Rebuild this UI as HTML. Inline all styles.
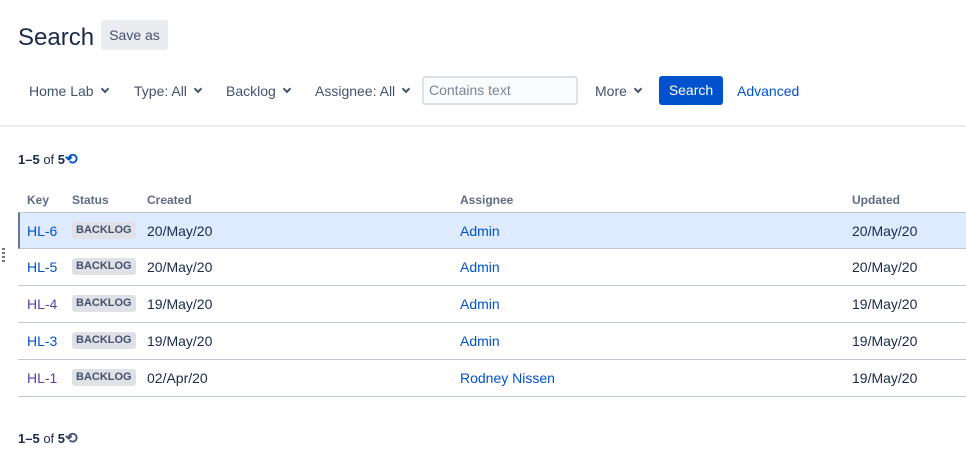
<!DOCTYPE html>
<html><head><style>
*{margin:0;padding:0;box-sizing:border-box}
body{width:966px;height:457px;overflow:hidden;background:#fff;font-family:"Liberation Sans",sans-serif;color:#172b4d;font-size:14px;position:relative}
.a{position:absolute;white-space:nowrap}
h1{position:absolute;left:18px;top:24px;font-size:24px;font-weight:normal;color:#172b4d}
.btn{position:absolute;left:101px;top:20px;width:67px;height:30px;background:#ebecf0;border-radius:3px;font-size:14px;line-height:30px;text-align:center;color:#42526e}
.f{position:absolute;top:83px;color:#42526e;font-size:14px}
.chev{display:inline-block;width:6px;height:6px;border-right:2px solid #42526e;border-bottom:2px solid #42526e;transform:rotate(45deg);margin-left:8px;position:relative;top:-4px}
.inp{position:absolute;left:422px;top:76px;width:156px;height:29px;border:2px solid #dfe1e6;border-radius:3px;background:#fafbfc;color:#7a869a;padding-left:5px;line-height:25px}
.sb{position:absolute;left:659px;top:76px;width:64px;height:29px;background:#0052cc;border-radius:3px;color:#fff;text-align:center;line-height:29px}
.hr{position:absolute;left:0;top:125px;width:966px;height:2px;background:#ebecf0}
.cnt{position:absolute;left:18px;font-size:13px;color:#172b4d}
.cnt b{font-weight:bold}
.rf{color:#0052cc;font-weight:bold;font-size:15px}
.th{position:absolute;top:193px;font-size:12px;font-weight:bold;color:#5e6c84}
.row{position:absolute;left:18px;width:948px;height:37px;border-bottom:1px solid #c1c7d0}
.row span{position:absolute;top:10px}
.k{left:9px;color:#0052cc}
.kv{left:9px;color:#5243aa}
.st{left:54px;top:9px!important;background:#dfe1e6;color:#42526e;font-size:11px;font-weight:bold;padding:2px 4px;border-radius:3px;line-height:13px}
.c{left:129px}
.as{left:442px;color:#0052cc}
.u{left:834px}
</style></head><body>
<h1>Search</h1>
<div class="btn">Save as</div>
<div class="f" style="left:29px">Home Lab<span class="chev"></span></div>
<div class="f" style="left:134px">Type: All<span class="chev"></span></div>
<div class="f" style="left:226px">Backlog<span class="chev"></span></div>
<div class="f" style="left:315px">Assignee: All<span class="chev"></span></div>
<div class="inp">Contains text</div>
<div class="f" style="left:595px">More<span class="chev"></span></div>
<div class="sb">Search</div>
<div class="f" style="left:737px;color:#0052cc">Advanced</div>
<div class="hr"></div>
<div class="cnt a" style="top:150px"><b>1–5</b> of <b>5</b><span class="rf">⟲</span></div>
<div class="th" style="left:27px">Key</div>
<div class="th" style="left:72px">Status</div>
<div class="th" style="left:147px">Created</div>
<div class="th" style="left:460px">Assignee</div>
<div class="th" style="left:852px">Updated</div>
<div class="row" style="top:212px;background:#deebff;border-left:2px solid #6b778c;border-top:1px solid #c1c7d0"><span class="k" style="left:7px">HL-6</span><span class="st" style="left:52px">BACKLOG</span><span class="c" style="left:127px">20/May/20</span><span class="as" style="left:440px">Admin</span><span class="u" style="left:832px">20/May/20</span></div>
<div class="row" style="top:249px"><span class="k">HL-5</span><span class="st">BACKLOG</span><span class="c">20/May/20</span><span class="as">Admin</span><span class="u">20/May/20</span></div>
<div class="row" style="top:286px"><span class="kv">HL-4</span><span class="st">BACKLOG</span><span class="c">19/May/20</span><span class="as">Admin</span><span class="u">19/May/20</span></div>
<div class="row" style="top:323px"><span class="k">HL-3</span><span class="st">BACKLOG</span><span class="c">19/May/20</span><span class="as">Admin</span><span class="u">19/May/20</span></div>
<div class="row" style="top:360px"><span class="kv">HL-1</span><span class="st">BACKLOG</span><span class="c">02/Apr/20</span><span class="as">Rodney Nissen</span><span class="u">19/May/20</span></div>
<div class="a" style="left:2px;top:248px;width:3px;height:16px;background:repeating-linear-gradient(#6b778c 0 2px,transparent 2px 4px)"></div>
<div class="cnt a" style="top:429px"><b>1–5</b> of <b>5</b><span class="rf" style="color:#42526e">⟲</span></div>
</body></html>
